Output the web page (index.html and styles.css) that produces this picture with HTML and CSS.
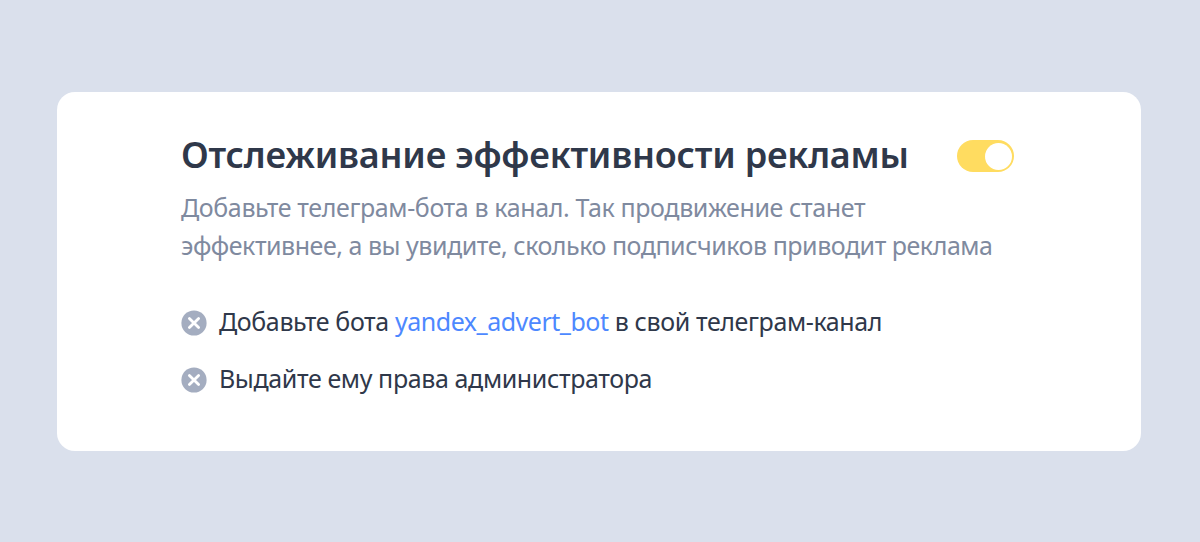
FILE: index.html
```html
<!DOCTYPE html>
<html lang="ru">
<head>
    <meta charset="UTF-8">
    <meta name="viewport" content="width=device-width, initial-scale=1.0">
    <title>Отслеживание эффективности рекламы</title>
    <link rel="stylesheet" href="styles.css">
</head>
<body>

<div class="card">
    <div class="card-header">
        <h1>Отслеживание эффективности рекламы</h1>
        <button class="toggle" role="switch" aria-checked="true"><span class="toggle-knob"></span></button>
    </div>

    <p class="description">
        <span class="line-first">Добавьте телеграм-бота в канал. Так продвижение станет</span><br>
        <span class="line-second">эффективнее, а вы увидите, сколько подписчиков приводит реклама</span>
    </p>

    <ul class="steps">
        <li class="step">
            <svg class="step-icon" viewBox="0 0 26 26">
                <circle cx="13" cy="13" r="12.6" fill="#a4adc0"/>
                <path d="M8.4 8.4l9.2 9.2M17.6 8.4l-9.2 9.2" stroke="#fff" stroke-width="2.8" stroke-linecap="round"/>
            </svg>
            <span class="step-text">Добавьте бота <a href="#">yandex_advert_bot</a> в свой телеграм-канал</span>
        </li>
        <li class="step">
            <svg class="step-icon" viewBox="0 0 26 26">
                <circle cx="13" cy="13" r="12.6" fill="#a4adc0"/>
                <path d="M8.4 8.4l9.2 9.2M17.6 8.4l-9.2 9.2" stroke="#fff" stroke-width="2.8" stroke-linecap="round"/>
            </svg>
            <span class="step-text">Выдайте ему права администратора</span>
        </li>
    </ul>
</div>

</body>
</html>
```
FILE: styles.css
```css
body {
    font-family: "Noto Sans", sans-serif;
    background-color: #dae0ec;
    color: #2f384a;
    margin: 0;
    height: 542px;
    overflow: hidden;
}

.card {
    box-sizing: border-box;
    width: 1084px;
    height: 359px;
    margin: 92px 0 0 57px;
    padding: 38px 127px 0 124px;
    background: #fff;
    border-radius: 18px;
    display: flow-root;
}

.card-header {
    display: flex;
    justify-content: space-between;
    align-items: center;
    height: 52px;
}

h1 {
    margin: 0;
    padding-bottom: 2px;
    font-size: 36px;
    line-height: 50px;
    font-weight: 600;
    letter-spacing: -0.22px;
    white-space: nowrap;
}

.toggle {
    display: flex;
    justify-content: flex-end;
    align-items: center;
    width: 57px;
    height: 32px;
    padding: 0 2px;
    border: none;
    border-radius: 16px;
    background: #ffdc60;
}

.toggle-knob {
    width: 27px;
    height: 27px;
    border-radius: 50%;
    background: #fff;
}

.description {
    margin: 6px 0 0;
    font-size: 25px;
    line-height: 38px;
    color: #7f8a9f;
    white-space: nowrap;
}

.line-first {
    letter-spacing: -0.38px;
}

.line-second {
    letter-spacing: -0.47px;
}

.steps {
    list-style: none;
    margin: 40px 0 0;
    padding: 0;
}

.step {
    display: flex;
    align-items: center;
    height: 38px;
    margin-bottom: 19px;
}

.step-icon {
    width: 26px;
    height: 26px;
    margin-right: 12px;
}

.step-text {
    padding-bottom: 5px;
    font-size: 25px;
    letter-spacing: -0.38px;
    white-space: nowrap;
}

.step a {
    color: #4d88ff;
    letter-spacing: -0.48px;
    text-decoration: none;
}
```
